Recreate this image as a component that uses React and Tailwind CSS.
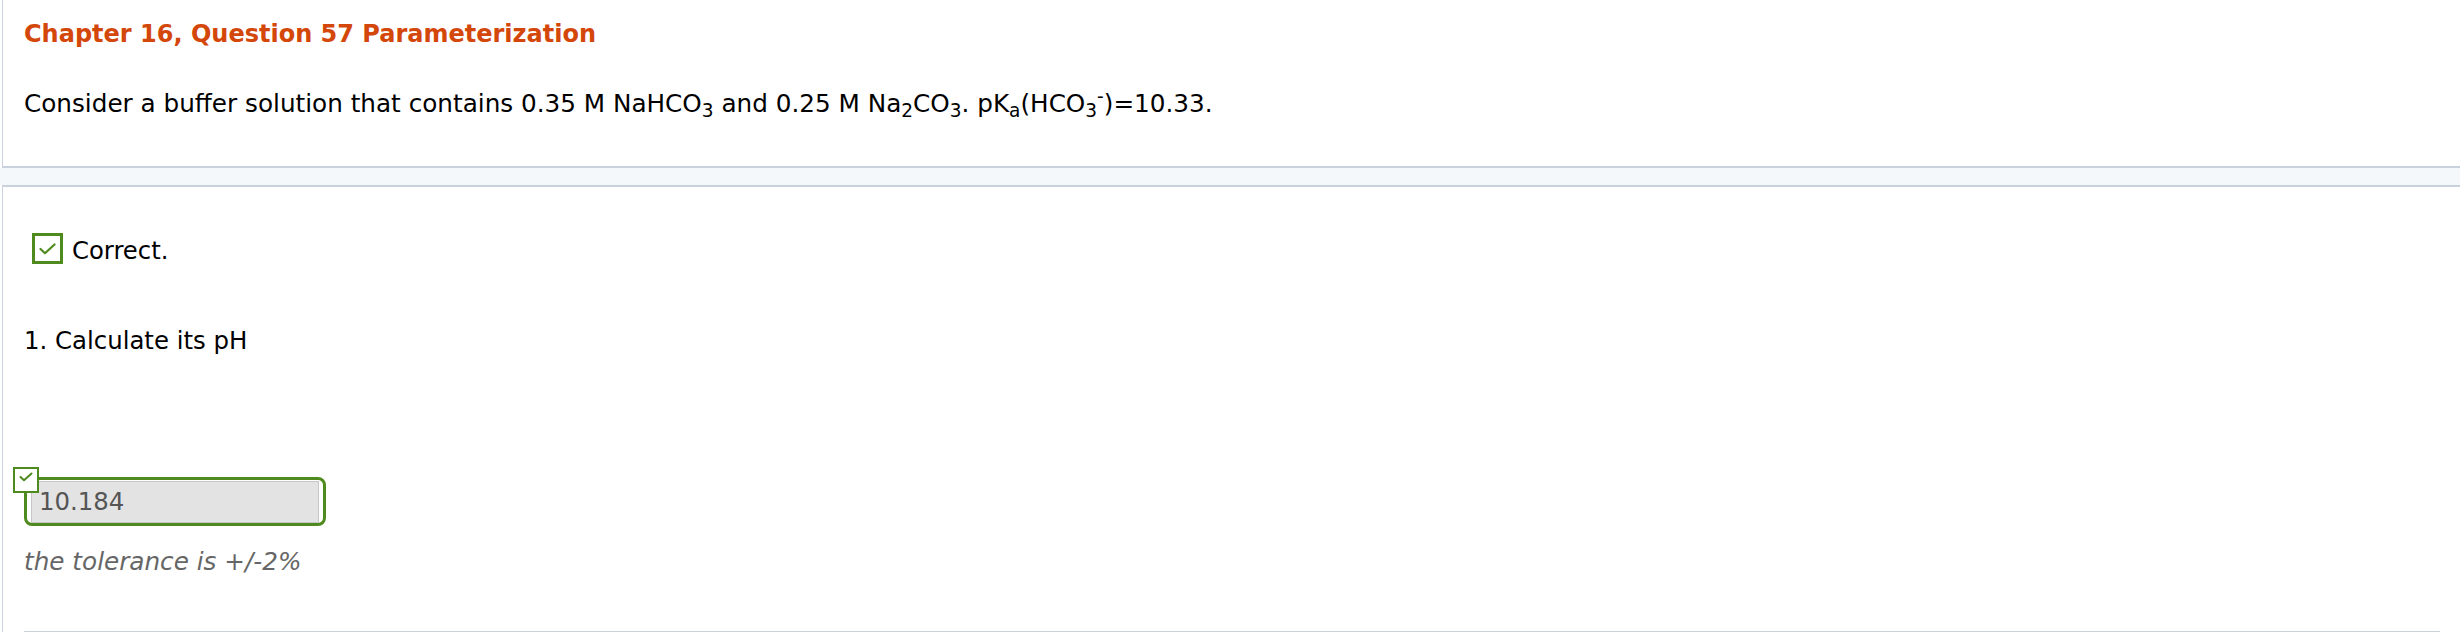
function CheckBox({ size = "big" }) {
  if (size === "small") {
    return (
      <div className="absolute left-[-14px] top-[-13px] w-[26px] h-[26px] border-2 border-[#4e8a1d] bg-white flex justify-center pt-[3px]">
        <svg width="14" height="10" viewBox="0 0 14 10" fill="none">
          <path d="M1.5 5 L5 8.2 L12.5 1.5" stroke="#4e8a1d" strokeWidth="2" strokeLinecap="round" strokeLinejoin="round" />
        </svg>
      </div>
    );
  }
  return (
    <div className="w-[31px] h-[31px] border-[3px] border-[#4e8a1d] bg-white flex items-center justify-center shrink-0">
      <svg width="17" height="12" viewBox="0 0 17 12" fill="none">
        <path d="M1.5 6 L6 10.2 L15.5 1.5" stroke="#4e8a1d" strokeWidth="2.2" strokeLinecap="round" strokeLinejoin="round" />
      </svg>
    </div>
  );
}

export default function App() {
  return (
    <div className="w-[2460px] h-[632px] overflow-hidden bg-white font-['DejaVu_Sans',Verdana,sans-serif] text-black">
      {/* question panel */}
      <div className="ml-[2px] border-l border-b-2 border-[#c9d1dc] pl-[21px] pt-[20px] pb-[47px]">
        <h2 className="text-[24px] leading-[28px] font-bold text-[#d4470a]">
          Chapter 16, Question 57 Parameterization
        </h2>
        <p className="mt-[41px] text-[24.7px] leading-[30px]">
          Consider a buffer solution that contains 0.35 M NaHCO<sub>3</sub> and 0.25 M Na<sub>2</sub>CO<sub>3</sub>. pK<sub>a</sub>(HCO<sub>3</sub><sup>-</sup>)=10.33.
        </p>
      </div>

      <div className="h-[17px] bg-[#f5f8fa]"></div>

      {/* answer panel */}
      <div className="ml-[2px] border-l border-t-2 border-[#c9d1dc] pl-[21px] pr-[20px] pt-[46px] h-[448px]">
        <div className="flex items-start h-[31px] ml-[8px]">
          <CheckBox />
          <span className="ml-[9px] mt-[3px] text-[24.3px] leading-[30px]">Correct.</span>
        </div>

        <p className="mt-[62px] text-[24.4px] leading-[30px]">1. Calculate its pH</p>

        <div className="relative mt-[121px] w-[302px] h-[49px] border-[3px] border-[#4e8a1d] rounded-[8px] pl-[4px] pr-[4px] pt-[1px]">
          <CheckBox size="small" />
          <div className="h-[42px] bg-[#e3e3e3] border border-[#c6c6c6] flex items-center pl-[7px] text-[24.4px] leading-[30px] text-[#555555]">
            10.184
          </div>
        </div>

        <p className="mt-[21px] text-[24.7px] leading-[30px] italic text-[#666666]">the tolerance is +/-2%</p>

        <div className="mt-[54px] h-[2px] bg-[#c9d1dc]"></div>
      </div>
    </div>
  );
}
